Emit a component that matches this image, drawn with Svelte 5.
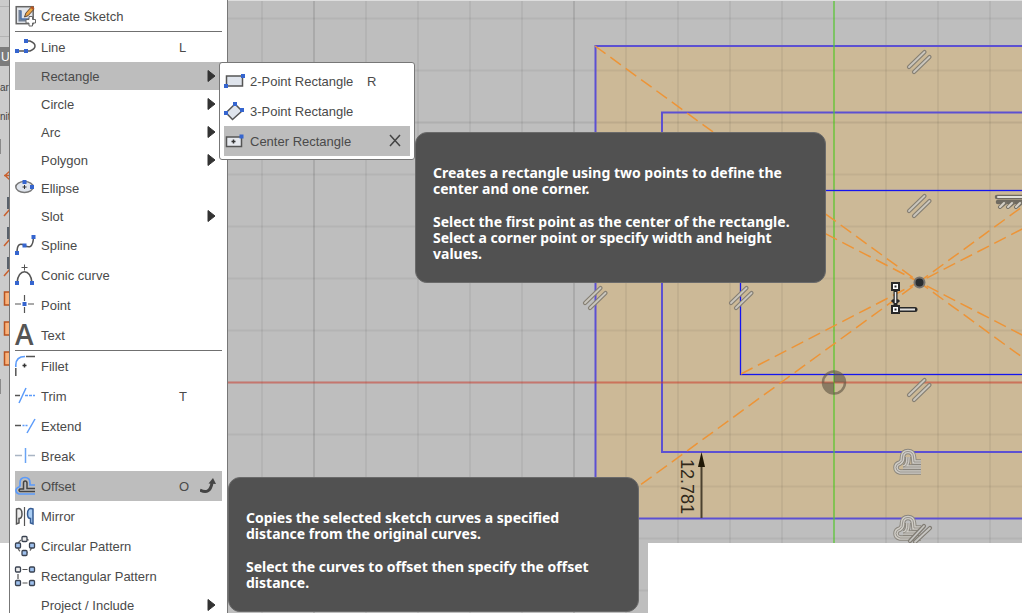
<script lang="ts">
	type Item = {
		label: string;
		icon?: string;
		key?: string;
		tail?: string;
		compact?: boolean;
		active?: boolean;
		divider?: boolean;
		tip?: string[];
		children?: Item[];
	};

	const items: Item[] = [
		{ label: 'Create Sketch', icon: 'sketch', divider: true },
		{ label: 'Line', icon: 'line', key: 'L' },
		{
			label: 'Rectangle',
			tail: 'more',
			compact: true,
			active: true,
			children: [
				{ label: '2-Point Rectangle', icon: 'rect2', key: 'R' },
				{ label: '3-Point Rectangle', icon: 'rect3' },
				{
					label: 'Center Rectangle',
					icon: 'rectCenter',
					tail: 'close',
					active: true,
					tip: [
						'Creates a rectangle using two points to define the center and one corner.',
						'Select the first point as the center of the rectangle. Select a corner point or specify width and height values.'
					]
				}
			]
		},
		{ label: 'Circle', tail: 'more', compact: true },
		{ label: 'Arc', tail: 'more', compact: true },
		{ label: 'Polygon', tail: 'more', compact: true },
		{ label: 'Ellipse', icon: 'ellipse', compact: true },
		{ label: 'Slot', tail: 'more', compact: true },
		{ label: 'Spline', icon: 'spline' },
		{ label: 'Conic curve', icon: 'conic' },
		{ label: 'Point', icon: 'point' },
		{ label: 'Text', icon: 'text', divider: true },
		{ label: 'Fillet', icon: 'fillet' },
		{ label: 'Trim', icon: 'trim', key: 'T' },
		{ label: 'Extend', icon: 'extend' },
		{ label: 'Break', icon: 'break' },
		{
			label: 'Offset',
			icon: 'offset',
			key: 'O',
			tail: 'repeat',
			active: true,
			tip: [
				'Copies the selected sketch curves a specified distance from the original curves.',
				'Select the curves to offset then specify the offset distance.'
			]
		},
		{ label: 'Mirror', icon: 'mirror' },
		{ label: 'Circular Pattern', icon: 'circular' },
		{ label: 'Rectangular Pattern', icon: 'rectangular' },
		{ label: 'Project / Include', tail: 'more', compact: true }
	];

	// grid spacing is 52px, every fifth line is a major one
	const columns = Array.from({ length: 36 }, (_, i) => ({ x: 2 + i * 52, major: i % 5 === 1 }));
	const rows = Array.from({ length: 12 }, (_, i) => ({ y: 18 + i * 52, major: i % 5 === 2 }));

	const parallels = [
		[919, 62],
		[919, 206],
		[595, 298],
		[741, 298],
		[919, 390]
	];
</script>

{#snippet handle(x: number, y: number)}
	<rect x={x - 2} y={y - 2} width="4" height="4" fill="#3565cf" stroke="none" />
{/snippet}

{#snippet node(x: number, y: number, fill: string)}
	<rect x={x - 2.5} y={y - 2.5} width="5" height="5" rx="1" {fill} stroke="#3a4250" stroke-width="1.3" />
{/snippet}

{#snippet icon(name?: string)}
	<svg class="icon" viewBox="0 0 21 24" fill="none" stroke="#555" stroke-width="1.5" aria-hidden="true">
		{#if name === 'sketch'}
			<rect x="1.2" y="2.7" width="17" height="17" fill="#e2e5ea" stroke="#666" />
			<path d="M5 6v10h9" stroke="#718096" stroke-width="3" />
			<path d="M6 7v8h8" stroke="#3e6fb5" stroke-width="1" />
			<path d="M9.5 13l1.4-4L16 3.3l2.6 2.4-5.5 6z" fill="#eda544" stroke="#5b4636" stroke-width="1" />
			<path d="M15.5 3.5l1.5-1.5 2.5 2.3-1.5 1.5z" fill="#b85420" stroke="none" />
			<path d="M14 12.5h3.5v3h3v3.5h-3v3h-3.5v-3h-3v-3.5h3z" fill="#fff" stroke="#666" stroke-width="1" />
		{:else if name === 'line'}
			<path d="M2 16h9M11 6h4q5 2 5 5t-5 5h-2" />
			{@render handle(2, 16)}
			{@render handle(11, 16)}
			{@render handle(11, 6)}
		{:else if name === 'ellipse'}
			<ellipse cx="9.5" cy="11" rx="8.7" ry="5.4" fill="#dfe4ec" stroke="#777" />
			<path d="M9.5 9v4M7.5 11h4" stroke="#333" stroke-width="1" />
			{@render handle(9.5, 6)}
			{@render handle(17, 11)}
		{:else if name === 'spline'}
			<path d="M2 20C2 11 5 10 9.5 12.5S18 15 18.5 4" />
			{@render handle(2, 20)}
			{@render handle(9.5, 12.5)}
			{@render handle(18.5, 4)}
		{:else if name === 'conic'}
			<path d="M2 20C3 5 16 5 17 20" />
			<path d="M9.5 1.5v6M6.5 4.5h6" stroke-width="1" />
			{@render handle(2, 20)}
			{@render handle(17, 20)}
		{:else if name === 'point'}
			<path d="M0 11h6M13 11h6M9.5 2v6M9.5 14v6" stroke-width="1.2" />
			{@render handle(9.5, 11)}
		{:else if name === 'text'}
			<text class="letter" x="0" y="21.5">A</text>
		{:else if name === 'fillet'}
			<path d="M.8 13V11Q1 2.5 10 2.5" stroke="#5b9bfa" stroke-width="1.6" />
			<path d="M11 2.5h9M.8 14v8" />
			<path d="M9.5 9.5v4M7.5 11.5h4" stroke="#333" />
		{:else if name === 'trim'}
			<path d="M0 11.5h5" />
			<path d="M4 19L11 4" stroke="#5b9bfa" />
			<path d="M10 11.5h10" stroke="#5b9bfa" stroke-dasharray="3 1" />
		{:else if name === 'extend'}
			<path d="M0 11.5h6" />
			<path d="M7.5 11.5h6" stroke="#5b9bfa" stroke-dasharray="2 1" />
			<path d="M12 19L20 5" stroke="#5b9bfa" />
		{:else if name === 'break'}
			<path d="M0 11.5h7M13 11.5h7" stroke="#a9b5c4" />
			<path d="M10.5 4v15" stroke="#6aa4f5" />
		{:else if name === 'offset'}
			<path d="M20 20H4Q1 19 1 16.5T4 13Q5.500 12.500 5 9 5 3.500 10 3.500T15 9V11H20" stroke="#5b9bfa" stroke-width="1.7" />
			<path d="M20 17.5H5Q3 16.300 5 15H8.500V9Q8.500 7 10.200 7T12 9v5.500h8" stroke="#444" />
		{:else if name === 'mirror'}
			<path d="M1.5 20V5Q7 3 7 10q0 4.500-3 4.500v4.500z" fill="#eee" />
			<path d="M9.5 3v19" stroke-width="1.2" />
			<path d="M18 20V5Q12.500 3 12.500 10q0 4.500 3 4.500v4.500z" fill="#a9cdf3" stroke="#365c94" />
		{:else if name === 'circular'}
			<circle cx="9.7" cy="12" r="7" stroke="#666" stroke-width="1.2" stroke-dasharray="5 3" />
			{@render node(9.5, 5, '#eee')}
			{@render node(3, 11.5, '#9fc1ee')}
			{@render node(17, 11.5, '#9fc1ee')}
			{@render node(9.5, 19, '#9fc1ee')}
		{:else if name === 'rectangular'}
			<path d="M7.5 5.5h5M7.5 19h5M3 10v5" stroke-width="1.2" />
			{@render node(3, 5.5, '#eee')}
			{@render node(17, 5.5, '#9fc1ee')}
			{@render node(3, 19, '#9fc1ee')}
			{@render node(17, 19, '#9fc1ee')}
		{:else if name === 'rect2'}
			<rect x="2.5" y="7" width="16" height="10" fill="#dfe4ec" />
			{@render handle(2, 17)}
			{@render handle(19, 7)}
		{:else if name === 'rect3'}
			<path d="M2 13.7L11 5l7 7-9.5 8.500z" fill="#dfe4ec" />
			{@render handle(2, 14)}
			{@render handle(11, 5)}
			{@render handle(18, 11)}
		{:else if name === 'rectCenter'}
			<rect x="2.5" y="8" width="15" height="9.5" fill="#e6e9ee" />
			<path d="M9.5 10.5v4M7.5 12.5h4" stroke="#333" />
			{@render handle(17.5, 7.5)}
		{/if}
	</svg>
{/snippet}

{#snippet tail(name?: string)}
	<svg class="tail" viewBox="0 0 22 24" fill="none" stroke="#444" aria-hidden="true">
		{#if name === 'more'}
			<path d="M8 6.5l7 5.5-7 5.5z" fill="#333" stroke="#333" />
		{:else if name === 'close'}
			<path d="M2 6l10 11M12 6L2 17" stroke-width="1.5" />
		{:else if name === 'repeat'}
			<path d="M0 16q10 5 12-7" stroke-width="3" />
			<path d="M8.5 9.5L13 4l3 6z" fill="#444" stroke="none" />
		{/if}
	</svg>
{/snippet}

{#snippet menu(list: Item[], kind: string)}
	<ul class="menu {kind}">
		{#each list as item (item.label)}
			<li class:divider={item.divider}>
				<button type="button" class:compact={item.compact} class:active={item.active}>
					{@render icon(item.icon)}
					<span class="label">{item.label}</span>
					<span class="key">{item.key ?? ''}</span>
					{@render tail(item.tail)}
				</button>
				{#if item.children}
					{@render menu(item.children, 'sub')}
				{/if}
				{#if item.tip}
					<div class="tip" role="tooltip">
						{#each item.tip as text}
							<p>{text}</p>
						{/each}
					</div>
				{/if}
			</li>
		{/each}
	</ul>
{/snippet}

{#snippet offsetMark()}
	{#each [['#8a867e', 5.5], ['#d0cdc7', 3.6], ['#96928b', 1]] as [stroke, width]}
		<path d="M13 9H-8Q-12 8-12 4.5T-8 0Q-5-2-5.5-6-5-11.500 0-11.500T5.500-6L6-1H13M13 4H-5Q0 4 0-6" {stroke} stroke-width={width} />
	{/each}
{/snippet}

<main>
	<svg class="canvas" fill="none">
		<rect width="100%" height="100%" fill="#bebebe" />
		<rect width="100%" height="1" fill="#dedede" />
		<rect x="595" y="46" width="648" height="472" fill="#ccb997" />

		{#each columns as { x, major }}
			<path d="M{x} 1V2000" stroke="#000" stroke-width="2" opacity={major ? 0.1 : 0.05} />
		{/each}
		{#each rows as { y, major }}
			<path d="M0 {y + 0.5}H4000" stroke="#000" stroke-width="2" opacity={major ? 0.08 : 0.05} />
		{/each}

		<g stroke="#5c50d2" stroke-width="2">
			<rect x="595.5" y="46" width="648" height="472.5" />
			<rect x="662" y="112.5" width="515" height="339.5" />
		</g>
		<path d="M0 382.5H4000" stroke="#e03020" stroke-opacity=".45" stroke-width="2" />
		<path d="M834 1V2000" stroke="#50dc20" stroke-opacity=".5" stroke-width="2" />
		<rect x="740.5" y="190.5" width="358" height="184" stroke="#1414f0" stroke-width="1.3" />

		<g stroke="#ed9437" stroke-width="1.5" stroke-dasharray="13 6">
			<path d="M595 46L919 282L1243 518M595 518L919 282L1243 46" />
			<path d="M741 190L919 282L1098 374M741 374L919 282L1098 190" />
		</g>

		<g fill="#5d5341" opacity=".6">
			<circle cx="834" cy="382.5" r="11" stroke="#5d5341" stroke-width="2.5" fill="none" />
			<path d="M834 382.5V371.500A11 11 0 0 1 845 382.500zM834 382.500V393.500A11 11 0 0 1 823 382.500z" />
		</g>

		{#each parallels as [x, y]}
			<g transform="translate({x} {y})" stroke-linecap="round">
				<path d="M-10 5L5.5-10M-5 10L10.5-5" stroke="#857f73" stroke-width="4.2" />
				<path d="M-10 5L5.5-10M-5 10L10.5-5" stroke="#cac6bd" stroke-width="1.8" />
			</g>
		{/each}

		<!-- horizontal constraint -->
		<g stroke-linecap="round">
			<path d="M997 197H1030M998 202H1030" stroke="#6f6a60" stroke-width="4.5" />
			<path d="M1005 203l-5 4M1013 203l-5 4M1021 203l-5 4" stroke="#777267" stroke-width="4" />
			<path d="M998 197H1030" stroke="#e2dfd8" stroke-width="2" />
			<path d="M1004 203l-4 4M1012 203l-4 4M1020 203l-4 4" stroke="#d5d1c8" stroke-width="2" />
		</g>

		<circle cx="919.5" cy="282.5" r="5" fill="#292d30" stroke="#77746f" stroke-width="2" />
		<g stroke="#282828">
			<path d="M895.5 289V307" stroke-width="4" />
			<path d="M892 300q3.5 4 7 0" stroke-width="3" />
			<path d="M895.5 292V303" stroke="#eee" stroke-width="1.5" />
			<path d="M899 309.5H915" stroke-width="5" stroke-linecap="round" />
			<path d="M899 309.5H915" stroke="#ddd" stroke-width="2" />
			<rect x="892" y="283" width="7" height="7" fill="#fff" stroke-width="2" />
			<rect x="892" y="306" width="7" height="7" fill="#fff" stroke-width="2" />
			<path d="M894.5 286.5h2M894.5 309.5h2" stroke-width="2" />
		</g>

		<path d="M701.5 460V518" stroke="#4b412f" stroke-width="2" />
		<path d="M701.5 452l3.5 15h-7z" fill="#201806" />
		<text class="dimension" transform="translate(681 459) rotate(90)">12.781</text>

		<g transform="translate(908 463)">{@render offsetMark()}</g>
		<g transform="translate(908 529)">{@render offsetMark()}</g>
		<path d="M915 542L930 528M910 541L924 526" stroke="#807c74" stroke-width="4.2" stroke-linecap="round" />
		<path d="M915 542L930 528M910 541L924 526" stroke="#c6c5c2" stroke-width="1.8" stroke-linecap="round" />

		<rect x="648" y="543" width="100%" height="100%" fill="#fff" />

		<!-- edge of the browser panel, mostly covered by the menu -->
		<g>
			<rect width="10" height="543" fill="#cbcbcb" />
			<path d="M0 6.5H10M0 36.5H10" stroke="#b3b3b3" />
			<rect y="47" width="10" height="19" fill="#7c7c7c" />
			<text x="1" y="61" font-size="12" fill="#fff">U</text>
			<text x="0" y="91" font-size="10" fill="#444">ar</text>
			<text x="0" y="120" font-size="10" fill="#444">nit</text>
			<path d="M.5 139V154M.5 379V394" stroke="#8a8a8a" />
			<path d="M10 171L5 175.5 10 180M4 175.5H10" stroke="#c9602d" stroke-width="1.3" />
			{#each [197, 227, 257] as y}
				<rect x="7" {y} width="3" height="12" fill="#59616b" />
				<path d="M4 {y + 19}l6-7" stroke="#c9602d" stroke-width="1.5" />
			{/each}
			{#each [292, 322, 352] as y}
				<rect x="4.5" {y} width="9" height="13" fill="#f9b27c" stroke="#b9531f" stroke-width="1.5" />
			{/each}
			<rect y="543" width="10" height="100%" fill="#fff" />
		</g>
	</svg>

	<nav aria-label="Sketch">
		{@render menu(items, 'root')}
	</nav>
</main>

<style>
	:global(body) {
		margin: 0;
		background: #fff;
	}

	main {
		position: relative;
		height: 100vh;
		overflow: hidden;
		font: 13px/16px 'Liberation Sans', Arial, sans-serif;
		color: #4a4a4a;
	}

	.canvas {
		position: absolute;
		inset: 0;
		width: 100%;
		height: 100%;
	}

	.dimension {
		font-size: 18px;
		fill: #30281a;
	}

	nav {
		position: relative;
		display: flex;
		padding-left: 9px;
	}

	.menu {
		box-sizing: border-box;
		margin: 0;
		list-style: none;
		background: #fff;
		border: 1px solid #777;
	}

	.root {
		width: 219px;
		padding: 1px 5px;
		border-top: 0;
	}

	.sub {
		position: absolute;
		top: 0;
		left: calc(100% - 3px);
		z-index: 1;
		width: 196px;
		padding: 3px 4px;
		border-radius: 3px;
	}

	li {
		position: relative;
	}

	.divider {
		border-bottom: 1px solid #707070;
	}

	button {
		display: flex;
		align-items: center;
		width: 100%;
		height: 30px;
		padding: 0;
		border: 0;
		background: none;
		font: inherit;
		color: inherit;
		text-align: left;
	}

	.compact {
		height: 28px;
	}

	.active {
		background: #bdbdbd;
	}

	.icon {
		flex: none;
		width: 21px;
		height: 24px;
		margin-right: 5px;
		overflow: visible;
	}

	.letter {
		font: 600 28px 'Open Sans', sans-serif;
		fill: #555;
		stroke: none;
	}

	.label,
	.key {
		padding-top: 2px;
	}

	.label {
		flex: 1;
		white-space: nowrap;
	}

	.key {
		width: 21px;
	}

	.tail {
		flex: none;
		width: 22px;
		height: 24px;
	}

	.tip {
		position: absolute;
		top: 6px;
		left: calc(100% + 6px);
		box-sizing: border-box;
		width: 411px;
		padding: 32px 20px 20px 17px;
		border: 1px solid #6a6a6a;
		border-radius: 12px;
		background: #515151;
		color: #fff;
		font: bold 14px/16px 'Noto Sans', sans-serif;
	}

	.sub .tip {
		left: calc(100% + 5px);
	}

	.tip p {
		margin: 0;
	}

	.tip p + p {
		margin-top: 17px;
	}
</style>
